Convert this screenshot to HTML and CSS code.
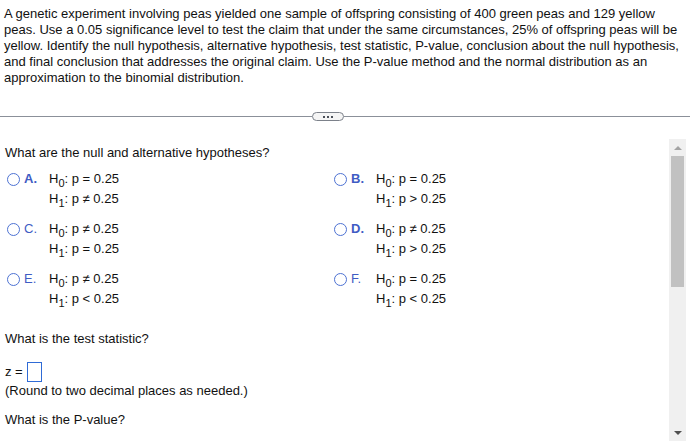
FILE: index.html
```html
<!DOCTYPE html>
<html>
<head>
<meta charset="utf-8">
<link rel="stylesheet" href="styles.css">
</head>
<body>
<div class="page">
  <p class="intro">A genetic experiment involving peas yielded one sample of offspring consisting of 400 green peas and 129 yellow peas. Use a 0.05 significance level to test the claim that under the same circumstances, 25% of offspring peas will be yellow. Identify the null hypothesis, alternative hypothesis, test statistic, P-value, conclusion about the null hypothesis, and final conclusion that addresses the original claim. Use the P-value method and the normal distribution as an approximation to the binomial distribution.</p>

  <div class="divider">
    <span class="rule rule-left"></span>
    <span class="more"><i></i><i></i><i></i></span>
    <span class="rule rule-right"></span>
  </div>

  <div class="panel">
    <div class="content">
      <p class="question">What are the null and alternative hypotheses?</p>
      <div class="options">
        <div class="option">
          <span class="radio"></span><span class="letter bold">A.</span>
          <div class="hyp">
            <div>H<sub>0</sub>: p = 0.25</div>
            <div>H<sub>1</sub>: p ≠ 0.25</div>
          </div>
        </div>
        <div class="option">
          <span class="radio"></span><span class="letter bold">B.</span>
          <div class="hyp">
            <div>H<sub>0</sub>: p = 0.25</div>
            <div>H<sub>1</sub>: p &gt; 0.25</div>
          </div>
        </div>
        <div class="option">
          <span class="radio"></span><span class="letter">C.</span>
          <div class="hyp">
            <div>H<sub>0</sub>: p ≠ 0.25</div>
            <div>H<sub>1</sub>: p = 0.25</div>
          </div>
        </div>
        <div class="option">
          <span class="radio"></span><span class="letter bold">D.</span>
          <div class="hyp">
            <div>H<sub>0</sub>: p ≠ 0.25</div>
            <div>H<sub>1</sub>: p &gt; 0.25</div>
          </div>
        </div>
        <div class="option">
          <span class="radio"></span><span class="letter">E.</span>
          <div class="hyp">
            <div>H<sub>0</sub>: p ≠ 0.25</div>
            <div>H<sub>1</sub>: p &lt; 0.25</div>
          </div>
        </div>
        <div class="option">
          <span class="radio"></span><span class="letter">F.</span>
          <div class="hyp">
            <div>H<sub>0</sub>: p = 0.25</div>
            <div>H<sub>1</sub>: p &lt; 0.25</div>
          </div>
        </div>
      </div>

      <p class="question q2">What is the test statistic?</p>
      <div class="answer-row">z = <span class="answer-box"></span></div>
      <p class="note">(Round to two decimal places as needed.)</p>
      <p class="question q3">What is the P-value?</p>
    </div>

    <div class="scrollbar">
      <span class="arrow arrow-up"></span>
      <span class="thumb"></span>
      <span class="track"></span>
      <span class="arrow arrow-down"></span>
    </div>
  </div>
</div>
</body>
</html>
```

FILE: styles.css
```css
* { box-sizing: border-box; }

html, body {
  margin: 0;
  padding: 0;
  background: #ffffff;
}

body {
  font-family: "Liberation Sans", Arial, sans-serif;
  font-size: 13px;
  color: #111111;
}

.page {
  height: 441px;
  display: flex;
  flex-direction: column;
  overflow: hidden;
}

.intro {
  margin: 0;
  padding: 6px 6px 0 4px;
  line-height: 16px;
}

.divider {
  display: flex;
  align-items: center;
  margin-top: 26px;
  height: 9px;
}

.rule {
  height: 1px;
  background: #8b9099;
}

.rule-left { flex: 0 0 312px; }
.rule-right { flex: 1 1 auto; }

.more {
  width: 32px;
  height: 9px;
  border: 1px solid #7c818a;
  border-radius: 5px;
  background: #f5f5f5;
  display: flex;
  align-items: center;
  justify-content: center;
  gap: 2px;
}

.more i {
  width: 2px;
  height: 2px;
  background: #4a4f58;
}

.panel {
  flex: 1 1 auto;
  display: flex;
  margin-top: 18px;
  padding-right: 4px;
  min-height: 0;
}

.content {
  flex: 1 1 auto;
  padding: 6px 0 0 5px;
}

.question {
  margin: 0;
  line-height: 16px;
}

.options {
  display: grid;
  grid-template-columns: 327px 1fr;
  row-gap: 10px;
  margin-top: 8px;
  padding-left: 2px;
}

.option {
  display: flex;
  align-items: flex-start;
  line-height: 20px;
}

.radio {
  flex: 0 0 13px;
  width: 13px;
  height: 13px;
  margin-top: 4px;
  border: 1.5px solid #4d72d3;
  border-radius: 50%;
  background: #ffffff;
}

.letter {
  flex: 0 0 29px;
  padding-left: 4px;
  color: #3f5cc4;
}

.letter.bold { font-weight: bold; }

.hyp sub {
  font-size: 11px;
  vertical-align: -4px;
  line-height: 0;
}

.q2 { margin-top: 22px; }

.answer-row {
  display: flex;
  align-items: center;
  gap: 4px;
  height: 22px;
  margin-top: 14px;
  line-height: 16px;
}

.answer-box {
  width: 15px;
  height: 20px;
  border: 1.5px solid #2f6bd6;
  background: #ffffff;
}

.note {
  margin: 0;
  line-height: 16px;
}

.q3 { margin-top: 13px; }

.scrollbar {
  flex: 0 0 17px;
  display: flex;
  flex-direction: column;
  align-items: center;
  background: #f0f0f0;
}

.arrow {
  width: 0;
  height: 0;
  border-left: 4px solid transparent;
  border-right: 4px solid transparent;
}

.arrow-up {
  margin-top: 7px;
  margin-bottom: 6px;
  border-bottom: 4px solid #a3a3a3;
}

.arrow-down {
  margin-bottom: 6px;
  border-top: 4px solid #505050;
}

.thumb {
  width: 13px;
  height: 131px;
  background: #c1c1c1;
}

.track { flex: 1 1 auto; }
```
